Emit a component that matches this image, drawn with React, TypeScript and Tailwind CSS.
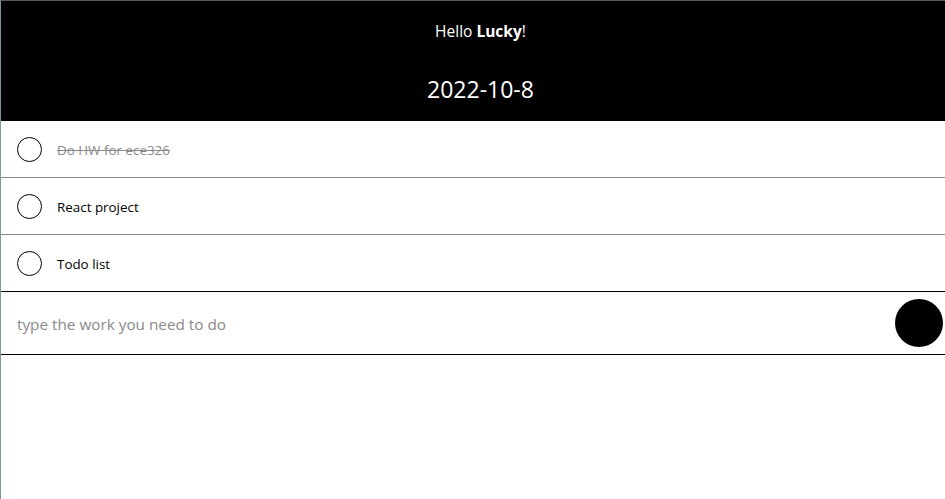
import React from "react";

const items = [
  { text: "Do HW for ece326", done: true, border: "border-[#8a8a8a]" },
  { text: "React project", done: false, border: "border-[#8a8a8a]" },
  { text: "Todo list", done: false, border: "border-black" },
];

export default function App() {
  return (
    <div
      className="h-[499px] w-[945px] bg-white border-l border-t border-l-[#7f93a3] border-t-[#5a5a5a] overflow-hidden"
      style={{ fontFamily: '"Segoe UI", "Open Sans", "Noto Sans", sans-serif' }}
    >
      <div className="h-[120px] bg-black text-white flex flex-col items-center pl-[15px]">
        <div className="pt-[18px] text-[15.5px] leading-[24px]">
          Hello <span className="font-bold">Lucky</span>!
        </div>
        <div className="mt-[30px] text-[23px] leading-[32px]">2022-10-8</div>
      </div>
      {items.map((it) => (
        <div
          key={it.text}
          className={`h-[57px] flex items-center border-b ${it.border}`}
        >
          <div className="ml-[16px] w-[25px] h-[25px] rounded-full border-[1.5px] border-black shrink-0" />
          <span
            className={`ml-[15px] mt-[2px] text-[13.4px] ${
              it.done ? "line-through text-[#8a8a8a]" : "text-black"
            }`}
          >
            {it.text}
          </span>
        </div>
      ))}
      <div className="h-[63px] flex items-center justify-between border-b border-black">
        <input
          className="ml-[16px] mt-[3px] flex-1 outline-none text-[15.3px] placeholder:text-[#8a8a8a] bg-transparent"
          placeholder="type the work you need to do"
        />
        <div className="w-[48px] h-[48px] rounded-full bg-black mr-[2px] shrink-0" />
      </div>
    </div>
  );
}
